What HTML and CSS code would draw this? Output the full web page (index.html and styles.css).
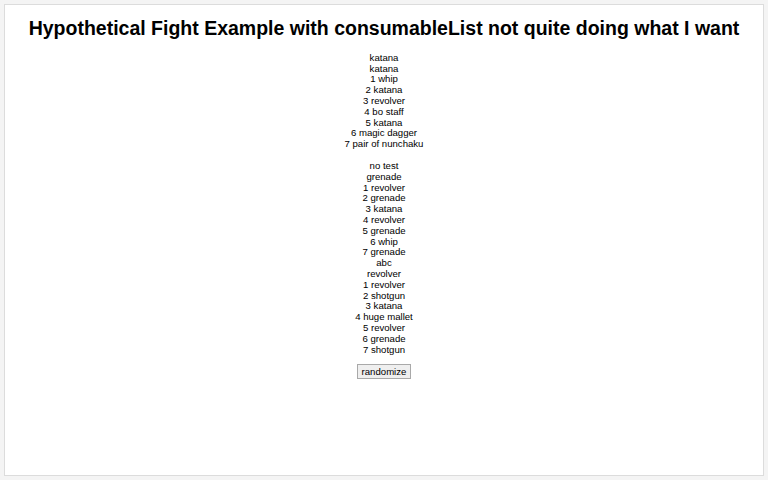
FILE: index.html
```html
<!DOCTYPE html>
<html>
<head>
<meta charset="utf-8">
<link rel="stylesheet" href="styles.css">
</head>
<body>
<div class="page">
  <h1 class="title">Hypothetical Fight Example with consumableList not quite doing what I want</h1>
  <div class="list">
    <div class="group">
      <div>katana</div>
      <div>katana</div>
      <div>1 whip</div>
      <div>2 katana</div>
      <div>3 revolver</div>
      <div>4 bo staff</div>
      <div>5 katana</div>
      <div>6 magic dagger</div>
      <div>7 pair of nunchaku</div>
    </div>
    <div class="group spaced">
      <div>no test</div>
      <div>grenade</div>
      <div>1 revolver</div>
      <div>2 grenade</div>
      <div>3 katana</div>
      <div>4 revolver</div>
      <div>5 grenade</div>
      <div>6 whip</div>
      <div>7 grenade</div>
    </div>
    <div class="group">
      <div>abc</div>
      <div>revolver</div>
      <div>1 revolver</div>
      <div>2 shotgun</div>
      <div>3 katana</div>
      <div>4 huge mallet</div>
      <div>5 revolver</div>
      <div>6 grenade</div>
      <div>7 shotgun</div>
    </div>
  </div>
  <div class="actions"><button class="btn">randomize</button></div>
</div>
</body>
</html>
```
FILE: styles.css
```css
html, body {
  margin: 0;
  padding: 0;
  height: 100%;
}
body {
  background: #f4f4f4;
  padding: 4px 4px 4px 4px;
  box-sizing: border-box;
  font-family: "Liberation Sans", Arial, sans-serif;
  color: #000;
}
.page {
  background: #fff;
  border: 1px solid #dcdcdc;
  height: 100%;
  box-sizing: border-box;
  padding-top: 11px;
  text-align: center;
}
.title {
  margin: 0;
  font-size: 19.5px;
  line-height: 24px;
  font-weight: bold;
  white-space: nowrap;
}
.list {
  margin-top: 12.8px;
  font-size: 9.6px;
  line-height: 10.82px;
}
.group.spaced {
  margin-top: 10.8px;
}
.actions {
  margin-top: 5.6px;
}
.btn {
  font-family: "Liberation Sans", Arial, sans-serif;
  font-size: 9.6px;
  padding: 1px 4px;
  background: #efefef;
  border: 1px solid #a9a9a9;
  border-radius: 0;
  color: #000;
}
```
